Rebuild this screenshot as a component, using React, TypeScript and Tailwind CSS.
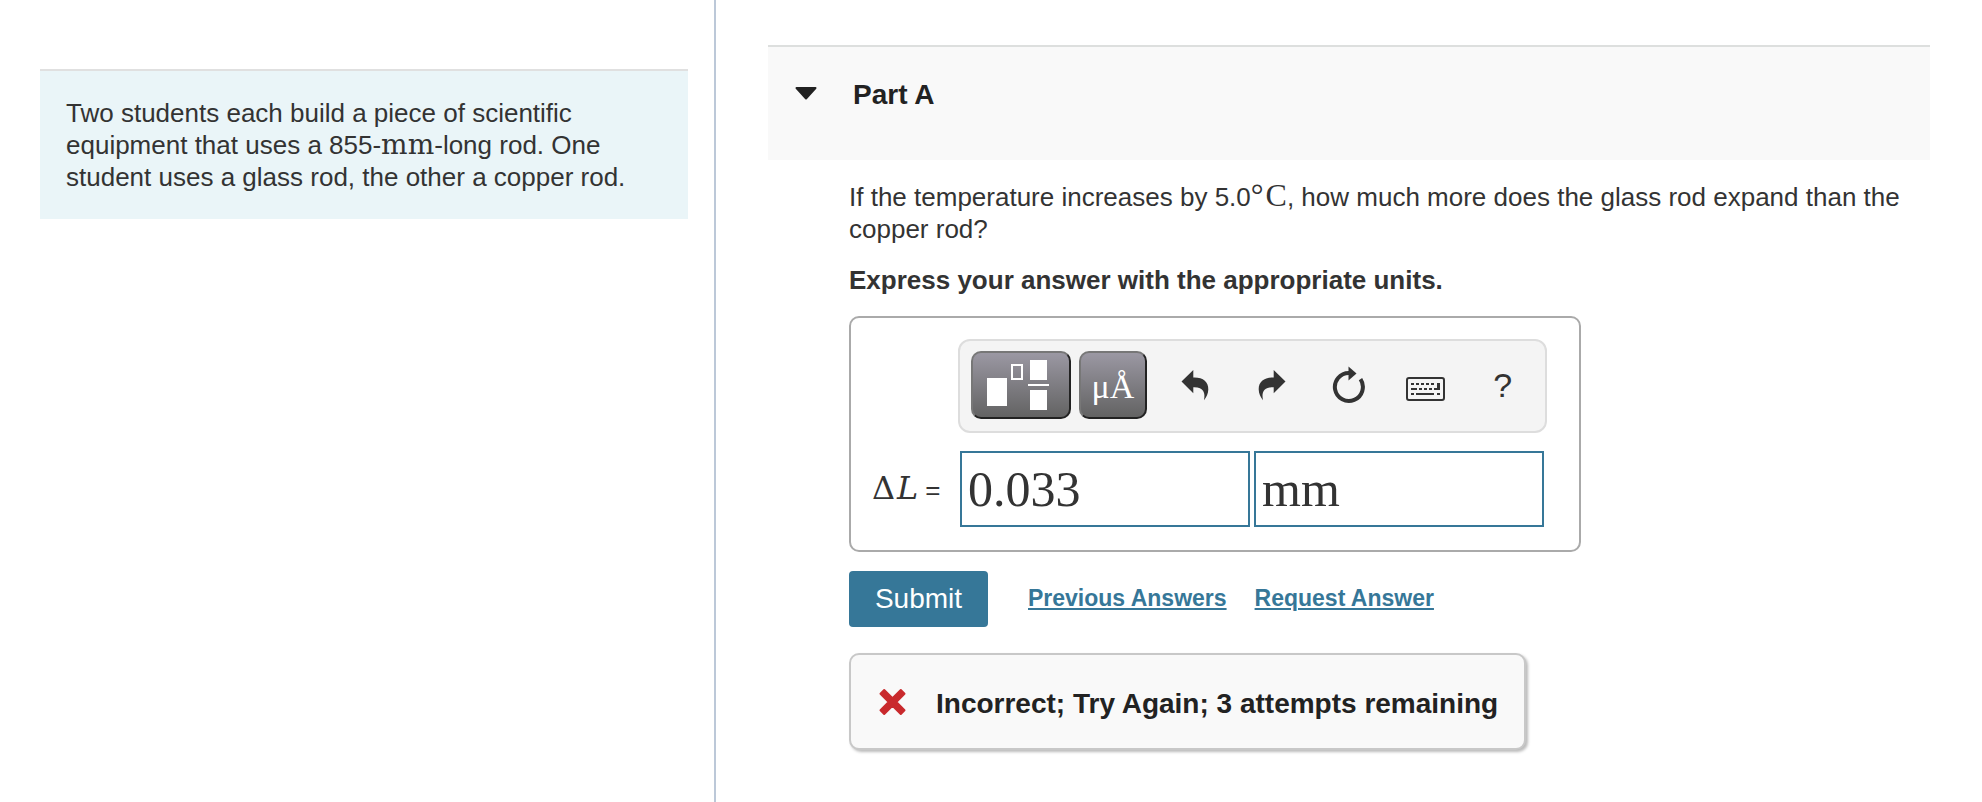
import { useState, type ReactNode } from 'react';

interface ToolButtonProps {
    label: string;
    children: ReactNode;
}

function ToolButton({ label, children }: ToolButtonProps) {
    return (
        <button type="button" aria-label={label} className="flex h-[68px] flex-1 items-center justify-center text-[#333333]">
            {children}
        </button>
    );
}

function TemplatesIcon() {
    return (
        <svg width="64" height="52" viewBox="0 0 64 52" fill="#ffffff" aria-hidden="true">
            <rect x="0" y="19" width="20" height="28" />
            <path d="M24 5h12v16H24zM26 7v12h8V7z" fillRule="evenodd" />
            <rect x="43" y="1" width="17" height="20" />
            <rect x="41" y="25" width="21" height="2" />
            <rect x="43" y="31" width="17" height="20" />
        </svg>
    );
}

function UndoIcon({ flip = false }: { flip?: boolean }) {
    return (
        <svg
            width="28"
            height="32"
            viewBox="0 0 28 32"
            fill="currentColor"
            aria-hidden="true"
            className={flip ? '-scale-x-100' : ''}
        >
            <path d="M0.5 12.5 12.3 1V8.6C22 8.2 27.5 13 27.3 20.5C27.2 24.5 25.5 28 23 31.2C24.6 23.5 22.5 17.8 12.3 18.2V24.3Z" />
        </svg>
    );
}

function ResetIcon() {
    return (
        <svg width="34" height="38" viewBox="0 0 34 38" aria-hidden="true">
            <path d="M28.5 13.2A14 14 0 1 1 17 7" fill="none" stroke="currentColor" strokeWidth="4" />
            <path d="M16.5 0.5 24.5 7.5 16.5 14.5Z" fill="currentColor" />
        </svg>
    );
}

function KeyboardIcon() {
    return (
        <svg width="39" height="24" viewBox="0 0 39 24" aria-hidden="true">
            <rect x="1" y="1" width="37" height="22" rx="2" fill="none" stroke="currentColor" strokeWidth="2" />
            <g fill="currentColor">
                <rect x="5" y="6" width="3" height="2" />
                <rect x="10" y="6" width="3" height="2" />
                <rect x="15" y="6" width="3" height="2" />
                <rect x="20" y="6" width="3" height="2" />
                <rect x="25" y="6" width="3" height="2" />
                <path d="M31 6h3v7h-6v-2h3z" />
                <rect x="5" y="11" width="6" height="2" />
                <rect x="13" y="11" width="3" height="2" />
                <rect x="18" y="11" width="3" height="2" />
                <rect x="23" y="11" width="3" height="2" />
                <rect x="5" y="16" width="3" height="2" />
                <rect x="10" y="16" width="18" height="2" />
                <rect x="31" y="16" width="3" height="2" />
            </g>
        </svg>
    );
}

function AnswerBox() {
    const [value, setValue] = useState('0.033');
    const [units, setUnits] = useState('mm');

    const inputClass =
        'h-[76px] w-0 min-w-0 flex-1 border-2 border-[#367798] bg-white px-[6px] font-["Liberation_Serif",serif] text-[50px] text-[#333333] outline-none';
    const paletteClass =
        'flex h-[68px] items-center justify-center rounded-[10px] border-2 border-t-[#777777] border-r-[#222222] border-b-[#222222] border-l-[#777777] bg-linear-to-b from-[#9b98a3] to-[#636363]';

    return (
        <div className="grid max-w-[732px] grid-cols-[107px_minmax(0,1fr)] gap-y-[18px] rounded-[10px] border-2 border-[#aaaaaa] bg-white pt-[21px] pr-8 pb-[23px]">
            {/* Toolbar */}
            <div className="col-start-2 flex rounded-xl border-2 border-[#dddddd] bg-[#f4f4f4] pt-[10px] pr-1 pb-3 pl-[11px]">
                <button type="button" aria-label="Templates" className={`${paletteClass} w-[100px] pr-1`}>
                    <TemplatesIcon />
                </button>
                <button
                    type="button"
                    aria-label="Symbols"
                    className={`${paletteClass} ml-2 w-[68px] pt-1 font-["Liberation_Serif",serif] text-[34px] text-white`}
                >
                    μÅ
                </button>
                <div className="ml-[10px] flex flex-1">
                    <ToolButton label="Undo">
                        <UndoIcon />
                    </ToolButton>
                    <ToolButton label="Redo">
                        <UndoIcon flip />
                    </ToolButton>
                    <ToolButton label="Reset">
                        <ResetIcon />
                    </ToolButton>
                    <ToolButton label="Keyboard shortcuts">
                        <span className="pt-2">
                            <KeyboardIcon />
                        </span>
                    </ToolButton>
                    <ToolButton label="Help">
                        <span className="text-[34px]">?</span>
                    </ToolButton>
                </div>
            </div>

            {/* Value and units */}
            <label htmlFor="value" className="flex items-baseline self-center pl-[21px] text-[26px] whitespace-nowrap">
                <span className="font-['DejaVu_Serif',serif] text-[32px]">Δ</span>
                <i className="ml-[2px] font-['DejaVu_Serif',serif] text-[32px]">L</i>
                <span className="ml-[7px]">=</span>
            </label>
            <div className="flex gap-1 pr-[3px] pl-[2px]">
                <input id="value" value={value} onChange={(e) => setValue(e.target.value)} className={inputClass} />
                <input aria-label="Units" value={units} onChange={(e) => setUnits(e.target.value)} className={inputClass} />
            </div>
        </div>
    );
}

function Feedback() {
    return (
        <div
            role="status"
            className="mt-[26px] flex h-[97px] w-fit items-center rounded-[10px] border-2 border-[#c8c8c8] bg-[#f9f9f9] pt-1 pr-[26px] pl-7 text-[28px] font-bold text-[#222222] shadow-[2px_2px_3px_#bbbbbb]"
        >
            <svg width="27" height="32" viewBox="0 0 27 32" className="mr-[30px]" aria-hidden="true">
                <path
                    d="M5.2 2 13.5 10.2 21.8 2 25.5 5.7 17.3 14 25.5 22.3 21.8 26 13.5 17.8 5.2 26 1.5 22.3 9.7 14 1.5 5.7Z"
                    fill="#c92a2d"
                    stroke="#c92a2d"
                    strokeWidth="2"
                    strokeLinejoin="round"
                />
            </svg>
            Incorrect; Try Again; 3 attempts remaining
        </div>
    );
}

export default function App() {
    const [open, setOpen] = useState(true);

    return (
        <div className="grid min-h-screen grid-cols-[358fr_633fr] bg-white font-['Liberation_Sans',Arial,sans-serif] text-[26px] leading-8 text-[#333333]">
            {/* Problem statement */}
            <aside className="border-r-2 border-[#bcc8d8] pt-[69px] pr-[26px] pl-10">
                <p className="border-t-2 border-[#e0e0e0] bg-[#eaf5f8] px-[26px] pt-[26px] pb-[26px]">
                    Two students each build a piece of scientific equipment that uses a 855-
                    <span className="font-['DejaVu_Serif',serif] text-[28px] leading-[0]">mm</span>
                    -long rod. One student uses a glass rod, the other a copper rod.
                </p>
            </aside>

            <main className="px-[52px] pt-[45px] pb-10">
                {/* Part header */}
                <header className="flex h-[115px] border-t-2 border-[#dddfde] bg-[#f9f9f9] pt-8">
                    <h2>
                        <button
                            type="button"
                            aria-expanded={open}
                            onClick={() => setOpen(!open)}
                            className="flex items-center pl-[27px] text-[28px] font-bold text-[#222222]"
                        >
                            <svg width="22" height="16" viewBox="0 0 22 16" className="mr-9" aria-hidden="true">
                                <path d="M1.5 1H20.5L11 11.5Z" fill="#222222" stroke="#222222" strokeWidth="2" strokeLinejoin="round" />
                            </svg>
                            Part A
                        </button>
                    </h2>
                </header>

                {open && (
                    <section className="pt-[21px] pl-[81px]">
                        <p>
                            If the temperature increases by 5.0
                            <span className="font-['Liberation_Serif',serif] text-[32px] leading-[0]">
                                °<span className="ml-[2px]">C</span>
                            </span>
                            , how much more does the glass rod expand than the copper rod?
                        </p>
                        <p className="mt-[19px] mb-5 font-bold">Express your answer with the appropriate units.</p>

                        <AnswerBox />

                        <div className="mt-[19px] flex items-center text-[23px] font-bold text-[#367798]">
                            <button type="button" className="h-14 w-[139px] rounded-[4px] bg-[#367798] text-[28px] font-normal text-white">
                                Submit
                            </button>
                            <a href="#previous" className="ml-10 pb-[2px] underline decoration-2 underline-offset-2">
                                Previous Answers
                            </a>
                            <a href="#request" className="ml-7 pb-[2px] underline decoration-2 underline-offset-2">
                                Request Answer
                            </a>
                        </div>

                        <Feedback />
                    </section>
                )}
            </main>
        </div>
    );
}
